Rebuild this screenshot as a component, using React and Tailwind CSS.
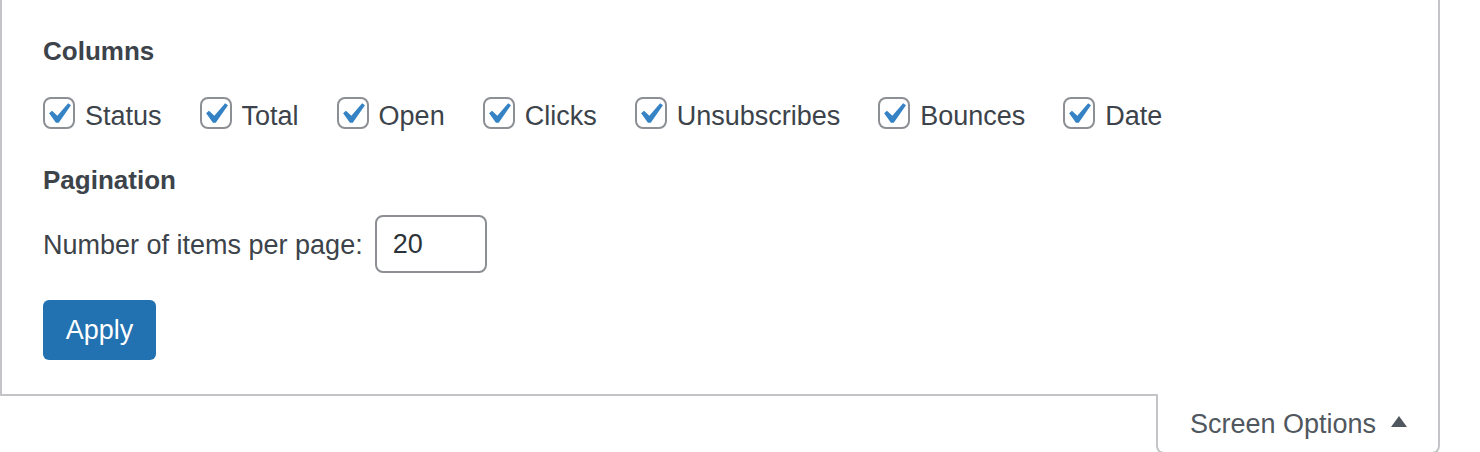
import { useState } from "react";

const columns = ["Status", "Total", "Open", "Clicks", "Unsubscribes", "Bounces", "Date"];

const Checkbox = ({ checked, onChange }) => (
  <button
    type="button"
    onClick={onChange}
    className="relative w-[32px] h-[32px] shrink-0 border-2 border-[#8c8f94] rounded-[8px] bg-white"
  >
    {checked && (
      <svg viewBox="0 0 20 20" className="absolute left-[-8px] top-[-6px] w-[42px] h-[42px]">
        <path d="M14.83 4.89l1.34.94-5.81 8.38H9.02L5.78 9.67l1.34-1.25 2.57 2.4z" fill="#3582c4" />
      </svg>
    )}
  </button>
);

const App = () => {
  const [checked, setChecked] = useState(columns.map(() => true));
  const [perPage, setPerPage] = useState("20");

  const toggle = (i) => {
    const next = [...checked];
    next[i] = !next[i];
    setChecked(next);
  };

  return (
    <div className="w-[1480px] h-[452px] bg-white font-['Liberation_Sans',Arial,sans-serif] text-[#3c434a] overflow-hidden">
      {/* screen options panel */}
      <div className="w-[1440px] border-x-2 border-b-2 border-[#c3c4c7] pl-[41px] pt-[33px] pb-[34px]">
        <div className="text-[26px] leading-[36px] font-bold">Columns</div>

        <div className="mt-[28px] flex items-center gap-x-[38px]">
          {columns.map((name, i) => (
            <label key={name} className="flex items-center gap-[10px] h-[32px]">
              <Checkbox checked={checked[i]} onChange={() => toggle(i)} />
              <span className="text-[27px] leading-[32px] pt-[5px]">{name}</span>
            </label>
          ))}
        </div>

        <div className="mt-[33px] text-[26px] leading-[36px] font-bold">Pagination</div>

        <div className="mt-[17px] flex items-center gap-[12px]">
          <span className="text-[27px] leading-[36px] pt-[2px]">Number of items per page:</span>
          <input
            type="text"
            value={perPage}
            onChange={(e) => setPerPage(e.target.value)}
            className="w-[112px] h-[58px] border-2 border-[#8c8f94] rounded-[8px] px-[16px] text-[27px] text-[#2c3338] outline-none"
          />
        </div>

        <button
          type="button"
          className="mt-[27px] w-[113px] h-[60px] bg-[#2271b1] rounded-[6px] text-white text-[27px] leading-[60px]"
        >
          Apply
        </button>
      </div>

      {/* tab */}
      <div className="w-[1440px] flex justify-end">
        <div className="-mt-[2px] w-[284px] h-[60px] bg-white border-x-2 border-b-2 border-[#c3c4c7] rounded-b-[8px] pl-[32px] pt-[12px] flex items-start text-[#50575e]">
          <span className="text-[27px] leading-[36px]">Screen Options</span>
          <svg viewBox="0 0 16 11" className="ml-[15px] mt-[10px] w-[16px] h-[11px]">
            <path d="M8 0L16 11H0z" fill="#50575e" />
          </svg>
        </div>
      </div>
    </div>
  );
};

export default App;
